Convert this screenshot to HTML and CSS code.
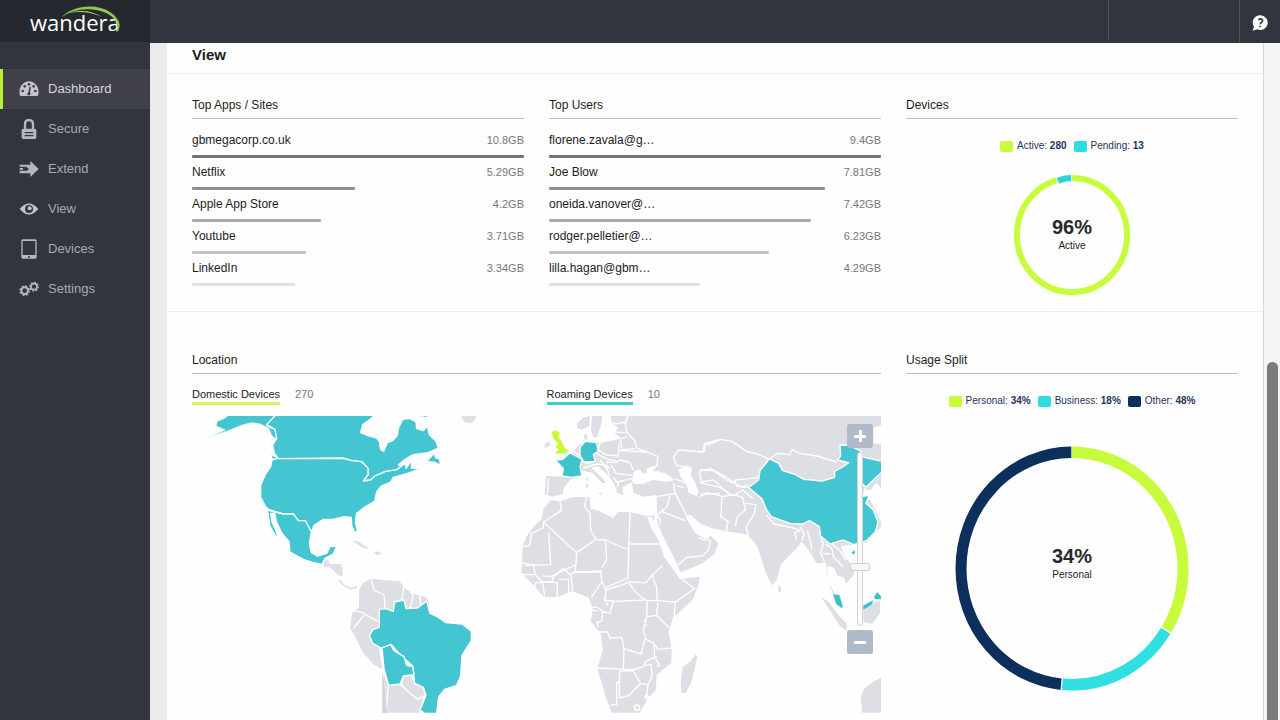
FILE: index.html
```html
<!DOCTYPE html>
<html lang="en">
<head>
<meta charset="utf-8">
<title>Wandera – Dashboard</title>
<link rel="stylesheet" href="styles.css">
</head>
<body>
<div class="app">
  <aside class="sidebar">
    <a class="brand" href="#">
      <span class="brand-name">wandera</span>
      <svg class="brand-swoosh" viewBox="0 0 180 84" aria-hidden="true">
        <path d="M4 34C40-4 112-8 150 18C188 44 182 70 168 80C178 60 170 38 140 22C98 2 42 6 4 34Z" fill="#8fc84a"/>
        <path d="M28 20C64 10 98 14 124 32C98 20 66 14 28 20Z" fill="#a5d65a"/>
      </svg>
    </a>
    <nav class="nav">
      <a class="nav-item active" href="#">
        <svg class="icon" viewBox="0 0 60 60"><path fill="#c3c5ce" d="M2 48C-2 22 14 7 30 7s32 15 28 41q-1 3-5 3H7q-4 0-5-3Z"/><g fill="#3f4049"><circle cx="11" cy="36" r="4"/><circle cx="17" cy="22" r="4"/><circle cx="30" cy="16" r="4"/><circle cx="44" cy="22" r="4"/><circle cx="49" cy="36" r="4"/><path d="M32 23l4 1-3 16q4 5 0 9h-7q-4-5 2-10Z"/></g></svg>
        Dashboard</a>
      <a class="nav-item" href="#">
        <svg class="icon" viewBox="0 0 60 60"><path fill="none" stroke="#b5b8c1" stroke-width="7" d="M18 31V16q0-13 12-13t12 13v15"/><rect x="8" y="29" width="44" height="31" rx="5" fill="#b5b8c1"/><path stroke="#33353e" stroke-width="4" d="M17 41h26M17 50h26"/></svg>
        Secure</a>
      <a class="nav-item" href="#">
        <svg class="icon" viewBox="0 0 60 60"><path fill="#b5b8c1" d="M2 17h32V6l25 24-25 24V43H2v-8h18v-3H2v-5h18v-4H2Z"/><path fill="#33353e" d="M12 27h8v-5l10 8-10 8v-5h-8Z"/></svg>
        Extend</a>
      <a class="nav-item" href="#">
        <svg class="icon" viewBox="0 0 60 60"><path fill="#c0c3cb" d="M2 30Q30-3 58 30Q30 63 2 30Z"/><circle cx="30" cy="30" r="12" fill="#33353e"/><circle cx="32" cy="28" r="6" fill="#c0c3cb"/></svg>
        View</a>
      <a class="nav-item" href="#">
        <svg class="icon" viewBox="0 0 60 60"><rect x="7" y="1" width="46" height="58" rx="5" fill="#b5b8c1"/><path fill="#33353e" d="M11 6h38v42H11Z"/><circle cx="30" cy="54" r="3" fill="#33353e"/></svg>
        Devices</a>
      <a class="nav-item" href="#">
        <svg class="icon" viewBox="0 0 60 60"><g fill="none" stroke="#b5b8c1"><circle cx="17" cy="35" r="10" stroke-width="6"/><circle cx="17" cy="35" r="14" stroke-width="4" stroke-dasharray="6 5"/><circle cx="45" cy="23" r="9" stroke-width="5"/><circle cx="45" cy="23" r="13" stroke-width="4" stroke-dasharray="5 5"/></g></svg>
        Settings</a>
    </nav>
  </aside>

  <div class="body">
    <header class="topbar">
      <div class="topbar-slot"></div>
      <button class="help" type="button" aria-label="Help">
        <svg class="help-icon" viewBox="0 0 48 48"><path fill="#fff" d="M25 1a22 22 0 1 1-9 42L2 47l4-12A22 22 0 0 1 25 1Z"/><path fill="none" stroke="#33353e" stroke-width="5" d="M19 15q5-5 10-3 5 3 1 8-5 4-5 8M24 32v5"/></svg>
      </button>
    </header>

    <div class="viewport">
      <main class="panel">
        <h1 class="panel-title">View</h1>

        <section class="row">
          <div class="card">
            <h2 class="card-title">Top Apps / Sites</h2>
            <ul class="bars">
              <li class="bar-row"><span>gbmegacorp.co.uk</span><span class="amount">10.8GB</span><i class="bar tone-1" style="width:100%"></i></li>
              <li class="bar-row"><span>Netflix</span><span class="amount">5.29GB</span><i class="bar tone-2" style="width:49%"></i></li>
              <li class="bar-row"><span>Apple App Store</span><span class="amount">4.2GB</span><i class="bar tone-3" style="width:39%"></i></li>
              <li class="bar-row"><span>Youtube</span><span class="amount">3.71GB</span><i class="bar tone-4" style="width:34.4%"></i></li>
              <li class="bar-row"><span>LinkedIn</span><span class="amount">3.34GB</span><i class="bar tone-5" style="width:30.9%"></i></li>
            </ul>
          </div>
          <div class="card">
            <h2 class="card-title">Top Users</h2>
            <ul class="bars">
              <li class="bar-row"><span>florene.zavala@g…</span><span class="amount">9.4GB</span><i class="bar tone-1" style="width:100%"></i></li>
              <li class="bar-row"><span>Joe Blow</span><span class="amount">7.81GB</span><i class="bar tone-2" style="width:83.1%"></i></li>
              <li class="bar-row"><span>oneida.vanover@…</span><span class="amount">7.42GB</span><i class="bar tone-3" style="width:79%"></i></li>
              <li class="bar-row"><span>rodger.pelletier@…</span><span class="amount">6.23GB</span><i class="bar tone-4" style="width:66.3%"></i></li>
              <li class="bar-row"><span>lilla.hagan@gbm…</span><span class="amount">4.29GB</span><i class="bar tone-5" style="width:45.6%"></i></li>
            </ul>
          </div>
          <div class="card">
            <h2 class="card-title">Devices</h2>
            <ul class="legend">
              <li><i class="swatch lime"></i><span>Active: <b>280</b></span></li>
              <li><i class="swatch cyan"></i><span>Pending: <b>13</b></span></li>
            </ul>
            <div class="ring ring-small">
              <svg class="ring-art" viewBox="0 0 116 120" preserveAspectRatio="none" aria-hidden="true">
                <g fill="none" stroke-width="6">
                  <ellipse cx="58" cy="60" rx="55" ry="57" stroke="#c8fb3c"/>
                  <path d="M43 6Q50 3 58 3" stroke="#fff" stroke-width="8"/>
                  <path d="M44 6Q50 3 57 3" stroke="#2bd3dc"/>
                </g>
              </svg>
              <div class="ring-label"><strong>96%</strong><span>Active</span></div>
            </div>
          </div>
        </section>

        <section class="row row-second">
          <div class="card card-wide">
            <h2 class="card-title">Location</h2>
            <div class="counts">
              <div class="count"><span class="count-name lime-line">Domestic Devices</span><span class="amount">270</span></div>
              <div class="count"><span class="count-name cyan-line">Roaming Devices</span><span class="amount">10</span></div>
            </div>
            <div class="map">
              <svg class="map-art" viewBox="192 416 689 297" role="img" aria-label="World map of device locations">
                <!-- Americas -->
                <g transform="translate(180 400) scale(.33333)" stroke="#fff" stroke-width="4" stroke-linejoin="round">
                  <g fill="#dedfe5">
                    <path d="M840 46H892L884 64 872 73 850 66Z"/>
                    <path d="M515 422L535 424 560 440 566 448 545 442ZM580 456L595 454 608 460 590 466Z" stroke-width="1"/>
                    <path d="M428 492L436 476 446 478 450 490 484 490 490 504 490 532 474 528 450 504 430 504Z"/>
                    <path d="M468 538L484 542 496 556 516 562 532 556 534 564 512 570 494 562Z" stroke-width="2"/>
                    <path d="M536 566L550 545 575 534 610 538 660 542 672 560 700 580 738 588 750 605 745 640 640 640 600 640 598 740 610 812 580 795 548 760 520 705 508 685 514 640 535 620Z"/>
                    <path d="M606 812L625 850 665 855 670 830 695 826 704 850 728 860 735 880 720 940H606Z"/>
                    <path d="M573 535L582 570 612 585 616 632M672 560L665 600 640 605M692 575L700 590 690 625M720 585L722 618M516 630L548 638 592 664M552 645L520 686M625 852L618 940M664 855L690 880 712 898 733 888" fill="none"/>
                    <path d="M606 812L614 850 622 940H606Z" fill="#d3d4da" stroke-width="1"/>
                  </g>
                  <g fill="#43c6d1">
                    <path d="M145 46H288L258 74 272 84 288 90 290 118 276 108 266 84 240 72 215 68 190 74 165 84 145 92 122 100 56 124 100 106 135 90 108 78 112 64 134 55Z" stroke-width="2"/>
                    <path d="M286 46H584L568 60 548 74 542 98 562 106 590 114 598 124 602 148 611 154 622 128 638 122 652 107 655 85 668 58 690 55 708 66 710 86 730 92 742 78 748 104 768 124 775 144 745 158 700 164 675 178 655 195 668 196 650 209 615 215 585 228 572 240 550 243 564 224 564 205 545 185 515 182 490 174 296 176 283 160 278 135 290 115 285 88 260 74Z"/>
                    <path d="M272 164L292 174 296 188 282 182ZM710 46H750L738 52ZM742 184L762 162 766 174 778 178 780 194 765 186Z" stroke-width="2"/>
                    <path d="M290 176H490L515 182 545 185 564 205 564 224 550 243 572 240 585 228 615 215 650 209 676 190 678 205 696 180 694 204 722 206 678 222 640 232 632 246 604 258 590 276 584 304 556 320 530 340 526 365 532 392 524 398 515 375 514 352 492 350 460 358 430 358 402 376 394 396 376 366 355 362 340 342 310 342 270 330 258 322 242 292 242 256 256 224 272 200 276 180Z"/>
                    <path d="M262 330L310 342 340 342 355 362 376 362 394 396 388 430 394 458 412 468 440 460 450 440 470 438 460 462 436 474 426 493 400 488 370 478 330 456 327 425 306 400 290 368 284 340 272 340 276 365 286 388 297 418 284 404 270 378Z"/>
                    <path d="M598 628L618 626 640 634 644 606 672 600 678 626 712 624 740 604 750 640 772 650 798 668 846 672 874 694 874 722 846 766 842 828 830 856 794 868 776 890 770 940H734L720 930 738 886 730 862 704 850 698 798 664 768 634 734 604 744 578 730 568 706 580 688 598 682Z"/>
                    <path d="M606 744L632 734 642 752 672 770 680 796 698 800 702 824 670 828 660 852 626 856 612 806Z"/>
                  </g>
                </g>
                <!-- Europe, Africa and Asia -->
                <g transform="translate(500 400) scale(.33333)" stroke="#fff" stroke-width="4" stroke-linejoin="round">
                  <g fill="#dedfe5">
                    <path d="M330 46H1146V78L1122 84 1122 128 1146 132V380L1100 430 1025 440 1036 470 1064 500 1064 525 1038 555 1030 535 1010 528 1000 505 984 500 986 545 1006 570 990 562 980 530 976 490 948 492 930 460 905 428 890 448 846 492 832 540 815 560 796 520 770 440 740 405 690 398 640 388 602 374 570 346 560 352 588 398 612 412 632 404 658 430 645 462 608 492 540 520 528 490 485 405 470 370 468 288 430 292 398 280 394 250 370 262 372 290 350 280 342 255 318 222 292 200 278 205 310 235 324 252 304 250 274 220 250 214 240 232 214 240 194 262 190 284 160 292 132 286 136 226 188 228 185 200 166 182 208 162 240 130 264 126 300 126 345 118 358 112 340 100 352 84 332 70Z"/>
                    <path d="M228 70L250 50 272 46 270 80 244 92 230 84Z"/>
                    <path d="M275 46H310L304 80 292 116 278 112 270 84Z"/>
                    <path d="M330 46H384L378 66 346 72 332 64ZM250 104L262 98 264 120 252 122ZM132 130L150 120 152 138 132 148Z"/>
                    <path d="M290 278L308 278 304 286ZM258 232L266 232 266 244 258 244ZM257 250L266 250 264 266 258 266Z" stroke-width="2"/>
                    <path d="M152 298L180 302 215 290 270 288 274 325 300 332 340 352 352 334 390 334 440 346 468 344 462 370 444 352 454 380 480 425 494 470 520 505 540 535 602 528 598 552 580 600 520 656 508 695 517 748 516 790 472 826 470 870 446 896 420 940H334L318 900 290 806 306 750 300 700 270 666 276 625 264 594 240 585 215 576 176 592 132 594 94 552 62 520 66 436 80 405 100 378 124 355 128 325Z"/>
                    <path d="M540 848L546 800 568 785 588 758 594 774 575 850 558 882 542 880Z"/>
                    <path d="M834 552L842 560 846 580 834 576ZM960 588L985 604 1012 640 1040 670 1042 694 1020 680 996 642ZM984 552L1000 570 1010 590 1000 584Z" stroke-width="2"/>
                    <path d="M1088 628L1120 605 1142 600V640L1118 674 1088 668Z"/>
                    <path d="M1084 940L1080 890 1090 866 1120 842 1146 830V940Z"/>
                  </g>
                  <!-- inland seas -->
                  <g fill="#fff" stroke="none">
                    <path d="M396 240L402 214 420 208 430 222 450 214 476 214 500 222 524 240 500 246 460 240 430 252 400 252ZM440 206L472 194 458 214 440 216Z"/>
                    <path d="M534 210L560 196 576 204 572 226 584 244 596 276 590 288 566 280 560 254 544 234Z"/>
                    <path d="M1100 255L1090 268 1112 270 1130 248 1146 270V370L1110 300 1086 290ZM445 352L454 350 486 405 528 488 540 530 520 500 490 450Z"/>
                    <path d="M1132 274H1146V320L1134 316Z"/>
                  </g>
                  <!-- borders: Europe and the Middle East -->
                  <path fill="none" d="M384 46L376 70 380 96 404 122 412 146 442 156 474 170 470 200M340 96L376 98M356 118L380 110M300 128L296 150 316 164 354 168 358 130M362 120L366 150 404 146M358 152L440 156M318 186L348 188 360 180 390 188 400 210M290 160L318 176 352 184M250 204L290 192 318 196 330 206M334 196L348 220 396 226M300 180L320 204 330 230M340 232L350 246 396 236M356 246L352 260M190 228L240 232M146 234L142 284M214 152L240 166M244 180L262 190 286 182M520 172L536 150 610 156 612 138 660 120M520 172L530 196 552 200M598 214L632 206 680 232 704 250M598 214L604 246 640 240 690 284M524 236L560 250M530 258L552 262M520 250L526 280 470 290M510 286L500 322 470 345M526 280L546 320 562 350M500 322L484 334 556 362M470 345L482 360 476 374M600 284L660 280M534 496L560 472 608 468M612 412L632 424 624 452 606 468M596 414L612 420 630 406"/>
                  <!-- borders: northern Africa -->
                  <path fill="none" d="M180 302L184 332 130 366 130 384 94 400 90 436 66 440M130 366L230 458 288 418 272 390 270 340 254 320 260 290M288 418L316 420 386 450 390 336M390 432H488M146 398L152 494 76 496M230 458L228 494 152 530 130 528M316 420L320 480 306 502M386 450L384 534 318 562M228 494L224 518 306 512"/>
                  <g transform="translate(0 450)">
                    <path fill="none" d="M66 38L100 46 106 74 64 74M106 74L128 96 160 94 158 84 190 54 210 74 226 66M100 122L108 98 128 96 134 140M134 96L172 98 172 140M178 88L206 88 206 130M214 76L218 128M222 66L302 66 306 94 274 142M306 94L318 120 386 98M318 120L314 150 324 166M314 150L346 154 436 150 410 130 386 98 388 92M390 96L438 98 456 76 462 92M456 76L488 46M462 92L470 110 472 152M438 152L472 152M472 152L500 154 526 156 584 116 548 90 538 80M526 156L522 204M442 154L440 200 430 240M440 200L470 196 508 234M470 196L474 158M430 212H440M434 226H442M430 240L438 268 462 280 474 298 516 294M434 268L424 312 372 296 366 262 330 264 322 246H296M274 172L292 172 308 184 306 212 292 218 294 232M306 184L330 190 340 152M274 182H292M292 354L370 358 398 360 430 350 440 332 470 320 456 324M372 296L370 358M398 360L422 400 444 404 456 380 454 344 432 346M360 362L358 394 350 398V466M398 362L358 364M358 394L358 444 388 436 422 400M350 462L330 466M444 404L440 440 454 446M462 280L464 320 478 346 470 350M386 300L424 312"/>
                    <circle cx="411" cy="473" r="8" fill="none"/><circle cx="440" cy="441" r="5" fill="none"/>
                  </g>
                  <!-- Asia -->
                  <g transform="translate(600 0)">
                    <path fill="none" d="M0 156L16 152 12 132 60 118 96 124 140 154 172 162 208 178M0 210L40 212 80 240 130 262 142 252M104 240L150 236 180 232M104 240L110 258 145 262M0 248L60 262 100 288 128 270 160 296M0 290L20 278 50 284 66 290 62 350 84 364 78 398M66 290L100 284 128 292 136 330 112 350 106 378M136 310L168 314 162 344 138 380 146 410M208 178L232 160 270 164 276 150 300 160 350 168 410 186M200 346L222 372 280 384 300 392 284 398 290 420M300 380L312 400 306 424M322 392L330 420 336 450M358 400L370 430 362 460 376 492M376 432L396 446 400 470 430 500M396 432L420 452 436 480M368 460L392 462"/>
                    <path fill="#43c6d1" d="M145 262L176 240 180 212 208 177 236 190 248 212 282 222 312 238 366 243 404 232 404 214 432 198 446 188 412 180 422 168 420 135 446 136 480 152 492 172 546 184V216L524 236 498 262 486 250 484 290 508 286 498 310 520 330 534 366 526 396 500 422 462 434 430 420 390 432 362 408 358 380 328 362 308 372 270 370 214 350 200 330 186 296Z"/>
                    <g fill="#3fbec3" stroke-width="1"><path d="M454 458L464 450 466 458 460 464Z"/><path d="M398 582L418 584 428 614 426 626 408 612Z"/><path d="M488 618L504 608 520 600 516 614 490 630ZM522 590L532 576 544 590V598L524 598Z"/></g>
                  </g>
                  <path fill="#c5fb34" stroke-width="1" d="M154 96L166 90 180 98 176 112 188 128 194 144 206 150 200 160 164 162 176 148 166 142 174 130 160 116Z"/>
                  <path fill="#3fc3cc" d="M166 180L188 178 210 158 246 178 240 200 246 228 214 232 186 228 190 206Z"/>
                  <path fill="#3fc3cc" d="M240 142L256 124 290 128 294 154 280 164 286 184 252 186 240 166Z"/>
                </g>
              </svg>
              <div class="zoom">
                <button class="zoom-btn zoom-in" type="button" aria-label="Zoom in"></button>
                <input class="zoom-range" type="range" min="0" max="100" value="33" aria-label="Map zoom">
                <button class="zoom-btn" type="button" aria-label="Zoom out"></button>
              </div>
            </div>
          </div>
          <div class="card">
            <h2 class="card-title">Usage Split</h2>
            <ul class="legend">
              <li><i class="swatch lime"></i><span>Personal: <b>34%</b></span></li>
              <li><i class="swatch cyan"></i><span>Business: <b>18%</b></span></li>
              <li><i class="swatch navy"></i><span>Other: <b>48%</b></span></li>
            </ul>
            <div class="ring ring-large">
              <svg class="ring-art" viewBox="0 0 234 234" preserveAspectRatio="none" aria-hidden="true">
                <g fill="none" stroke-width="11" transform="rotate(-90 117 117)">
                  <circle cx="117" cy="117" r="111" stroke="#c8fb3c" pathLength="1000" stroke-dasharray="338 662"/>
                  <circle cx="117" cy="117" r="111" stroke="#2fdfe2" pathLength="1000" stroke-dasharray="174 826" stroke-dashoffset="-340"/>
                  <circle cx="117" cy="117" r="111" stroke="#0d2f5c" pathLength="1000" stroke-dasharray="483 517" stroke-dashoffset="-516"/>
                </g>
              </svg>
              <div class="ring-label"><strong>34%</strong><span>Personal</span></div>
            </div>
          </div>
        </section>
      </main>
      <div class="scroll-track"><div class="scroll-thumb"></div></div>
    </div>
  </div>
</div>
</body>
</html>
```

FILE: styles.css
```css
* { box-sizing: border-box; }

body {
  margin: 0;
  background: #ebebeb;
  color: #1d1d20;
  font: 12px/18px "Liberation Sans", Arial, sans-serif;
}

ul { list-style: none; margin: 0; padding: 0; }

.app {
  display: grid;
  grid-template-columns: 150px minmax(0, 1fr);
  min-height: 100vh;
}

/* Sidebar */
.sidebar { background: #33353e; }

.brand {
  position: relative;
  display: block;
  height: 42px;
  padding: 8px 0 0 30px;
  background: #26282f;
  color: #fff;
  text-decoration: none;
}
.brand-name { font: 22px/28px "Open Sans", "Noto Sans", sans-serif; }
.brand-swoosh {
  position: absolute;
  left: 60px;
  top: 6px;
  width: 60px;
  height: 28px;
}

.nav { padding-top: 27px; }
.nav-item {
  display: flex;
  align-items: center;
  gap: 9px;
  height: 40px;
  padding-left: 19px;
  color: #a7a9b2;
  font-size: 13px;
  text-decoration: none;
}
.nav-item.active {
  padding-left: 16px;
  border-left: 3px solid #b9f02e;
  background: #3f4049;
  color: #d6d7dc;
}
.icon { width: 20px; height: 20px; }

/* Top bar */
.body { display: flex; flex-direction: column; }
.topbar {
  display: flex;
  justify-content: flex-end;
  height: 43px;
  background: #33353e;
}
.topbar-slot { width: 131px; height: 40px; border-left: 1px solid #50525a; }
.help {
  width: 41px;
  padding: 0;
  border: 0;
  border-left: 1px solid #50525a;
  background: none;
}
.help-icon { display: block; width: 16px; height: 16px; margin: 2px auto 0; }

/* Content */
.viewport { display: flex; flex: 1; padding-left: 17px; }
.panel { flex: 1; min-width: 0; background: #fefefe; }
.panel-title {
  margin: 0;
  padding: 0 25px 7px;
  border-bottom: 1px solid #ececec;
  font-size: 15px;
  line-height: 23px;
}

.scroll-track {
  width: 17px;
  padding: 319px 2px 0 3px;
  border-left: 1px solid #d6d6d6;
  background: #f4f4f4;
}
.scroll-thumb { height: 100%; border-radius: 6px 6px 0 0; background: #7b7b7b; }

.row {
  display: grid;
  grid-template-columns: repeat(3, minmax(0, 1fr));
  gap: 25px;
  padding: 22px 25px 16px;
  border-bottom: 1px solid #ececec;
}
.row-second { padding: 39px 25px 7px; border-bottom: 0; }
.card-wide { grid-column: span 2; }
.card-title {
  margin: 0;
  padding-bottom: 4px;
  border-bottom: 1px solid #bdbdbd;
  font-size: 12px;
  font-weight: 400;
  line-height: 18px;
}
.amount { color: #77777a; font-size: 11px; }

/* Ranked bars */
.bars { padding-top: 10px; }
.bar-row {
  display: grid;
  grid-template-columns: 1fr auto;
  padding-bottom: 3px;
  line-height: 23px;
}
.bar { grid-column: 1 / -1; height: 3px; margin-top: 3px; border-radius: 1px; }
.tone-1 { background: #747474; }
.tone-2 { background: #8f8f8f; }
.tone-3 { background: #aaaaaa; }
.tone-4 { background: #c4c4c4; }
.tone-5 { background: #e2e2e2; }

/* Legends and rings */
.legend {
  display: flex;
  justify-content: center;
  gap: 7px;
  margin-top: 19px;
  color: #26345a;
  font-size: 10px;
  line-height: 16px;
}
.legend li { display: flex; align-items: center; gap: 4px; }
.swatch { width: 13px; height: 11px; border-radius: 2px; }
.lime { background: #c8fb3c; }
.cyan { background: #2fdbe0; }
.navy { background: #0d2f5c; }

.ring {
  display: grid;
  place-items: center;
  margin-left: auto;
  margin-right: auto;
}
.ring > * { grid-area: 1 / 1; }
.ring-small { width: 116px; height: 120px; margin-top: 21px; }
.ring-large { width: 234px; height: 245px; margin-top: 37px; }
.ring-art { width: 100%; height: 100%; }
.ring-label { display: grid; justify-items: center; font-size: 10px; line-height: 16px; }
.ring-large .ring-label { padding-bottom: 10px; }
.ring-label strong { font-size: 20px; line-height: 22px; color: #29292c; }

/* Location */
.counts { display: grid; grid-template-columns: 1fr 1fr; gap: 20px; padding-top: 12px; font-size: 11px; }
.count { display: flex; align-items: flex-start; gap: 15px; line-height: 17px; }
.count-name { line-height: 16px; border-bottom: 3px solid; }
.lime-line { border-color: #d1f55e; }
.cyan-line { border-color: #43cbd3; }

.map { position: relative; margin-top: 11px; }
.map-art { display: block; width: 100%; height: auto; }
.zoom {
  position: absolute;
  top: 8px;
  right: 8px;
  display: flex;
  flex-direction: column;
  align-items: center;
  gap: 4px;
}
.zoom-btn {
  width: 26px;
  height: 24px;
  padding: 0;
  border: 0;
  border-radius: 3px;
  background: linear-gradient(#fff, #fff) center / 12px 3px no-repeat, #b1bac8;
}
.zoom-in {
  background:
    linear-gradient(#fff, #fff) center / 12px 3px no-repeat,
    linear-gradient(#fff, #fff) center / 3px 12px no-repeat,
    #b1bac8;
}
.zoom-range {
  appearance: none;
  writing-mode: vertical-lr;
  direction: rtl;
  width: 20px;
  height: 174px;
  margin: 0;
  background: none;
}
.zoom-range::-webkit-slider-runnable-track {
  width: 6px;
  height: 174px;
  border: 1px solid #d5d3d6;
  border-radius: 3px;
  background: #fafafa;
}
.zoom-range::-webkit-slider-thumb {
  appearance: none;
  width: 20px;
  height: 8px;
  margin-left: -8px;
  border: 1px solid #cfcfd1;
  border-radius: 2px;
  background: #f6f6f6;
}
```
